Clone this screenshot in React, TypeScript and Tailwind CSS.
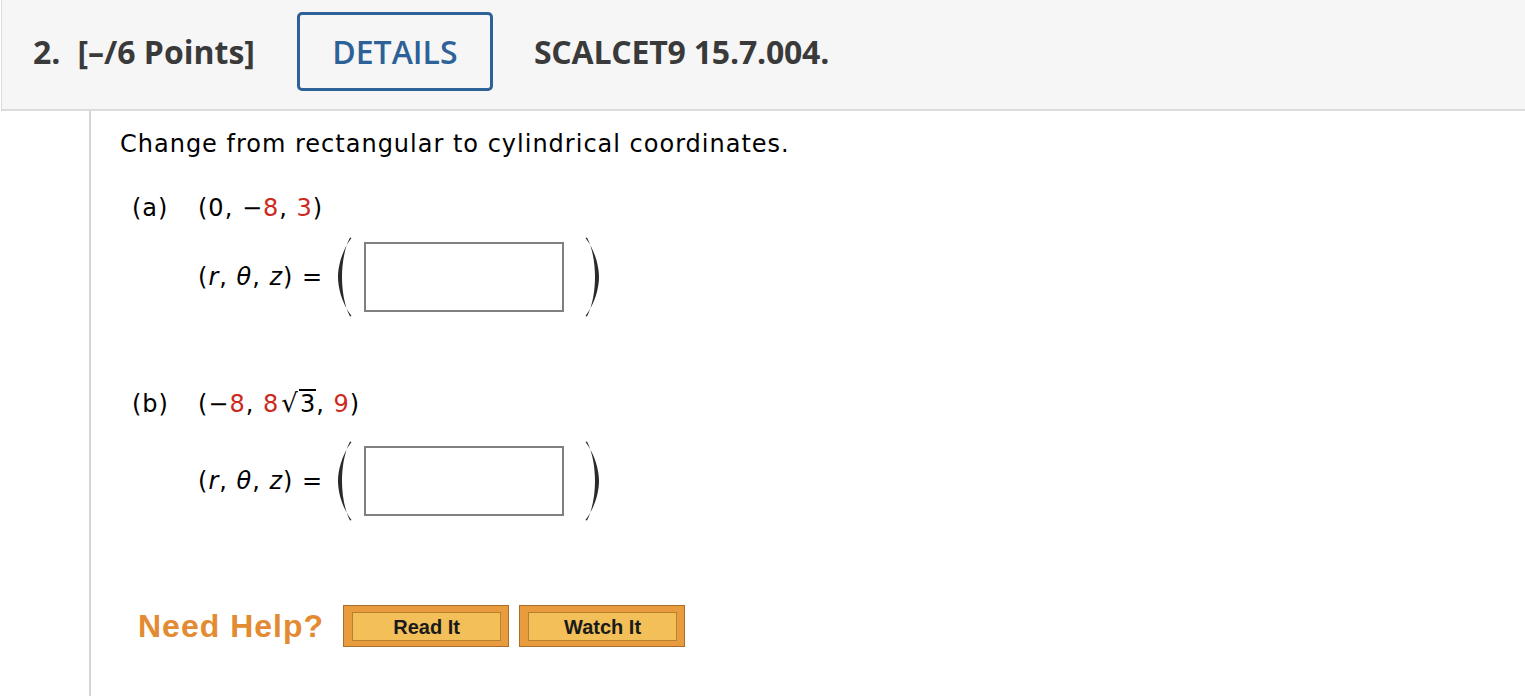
import React from "react";

// 大括号（左/右）——用 svg 画，和原图的细长括号一致
const BigParen = ({ side }: { side: "left" | "right" }) => (
  <svg width="17" height="80" viewBox="0 0 17 80" className="shrink-0">
    {side === "left" ? (
      <path d="M14.5 1 C4.5 14 1 30 1 40 C1 50 4.5 66 14.5 79 L13 79.5 C7 68 5 52 5 40 C5 28 7 12 13 0.5 Z" fill="#2a2a2a" />
    ) : (
      <path d="M2.5 1 C12.5 14 16 30 16 40 C16 50 12.5 66 2.5 79 L4 79.5 C10 68 12 52 12 40 C12 28 10 12 4 0.5 Z" fill="#2a2a2a" />
    )}
  </svg>
);

const AnswerRow = () => (
  <div className="flex items-center">
    <span className="w-[139px] whitespace-nowrap">
      (<i>r</i>, <i>θ</i>, <i>z</i>) =
    </span>
    <BigParen side="left" />
    <div className="ml-[10px] h-[70px] w-[200px] border-2 border-[#808080] bg-white" />
    <div className="w-[19px]" />
    <BigParen side="right" />
  </div>
);

const HelpButton = ({ label }: { label: string }) => (
  <div className="flex h-[42px] w-[166px] border border-[#a86f2a] bg-[#e99c3d] pb-[5px] pl-[8px] pr-[7px] pt-[6px]">
    <div className="flex h-full w-full items-center justify-center border border-[#b9812f] bg-[#f2bf59] font-['Liberation_Sans',Arial,sans-serif] text-[20px] font-bold tracking-normal text-[#1a1a1a]">
      {label}
    </div>
  </div>
);

const Red = ({ children }: { children: React.ReactNode }) => (
  <span className="text-[#cc2a1e]">{children}</span>
);

export default function App() {
  return (
    <div className="h-[696px] w-[1525px] overflow-hidden bg-white">
      {/* 题目头部 */}
      <div className="ml-px flex h-[111px] items-center border-b-2 border-l border-[#dcdcdc] bg-[#f6f6f6] pb-[6px] font-['Open_Sans',sans-serif] text-[32px] font-bold text-[#3a3a3a]">
        <span className="ml-[31px]">2.</span>
        <span className="ml-[17px]">[–/6 Points]</span>
        <div className="ml-[42px] flex h-[79px] w-[196px] items-center justify-center rounded-[5px] border-[3px] border-[#2d6298] font-semibold text-[#2d6298]">
          DETAILS
        </div>
        <span className="ml-[41px] tracking-[-0.2px]">SCALCET9 15.7.004.</span>
      </div>

      {/* 题目内容 */}
      <div className="ml-[89px] h-[585px] border-l-2 border-[#d4d4d4] pl-[29px] font-['DejaVu_Sans',Verdana,sans-serif] text-[24px] tracking-[1px] text-black">
        <p className="pt-[18px] leading-[30px]">Change from rectangular to cylindrical coordinates.</p>

        <div className="ml-[12px] mt-[34px] flex leading-[30px]">
          <span className="w-[66px]">(a)</span>
          <span>
            (0, −<Red>8</Red>, <Red>3</Red>)
          </span>
        </div>
        <div className="ml-[78px] mt-[14px]">
          <AnswerRow />
        </div>

        <div className="ml-[12px] mt-[72px] flex leading-[30px]">
          <span className="w-[66px]">(b)</span>
          <span>
            (−<Red>8</Red>, <Red>8</Red>
            <span className="ml-[2px] inline-flex items-end">
              <span className="text-[26px] leading-[28px]">√</span>
              <span className="border-t-2 border-black pl-px leading-[26px]">3</span>
            </span>
            , <Red>9</Red>)
          </span>
        </div>
        <div className="ml-[78px] mt-[22px]">
          <AnswerRow />
        </div>

        <div className="ml-[18px] mt-[81px] flex items-center">
          <span className="mr-[19px] font-['Liberation_Sans',Arial,sans-serif] text-[32px] font-bold tracking-[1px] text-[#e38b32]">
            Need Help?
          </span>
          <HelpButton label="Read It" />
          <div className="w-[10px]" />
          <HelpButton label="Watch It" />
        </div>
      </div>
    </div>
  );
}
